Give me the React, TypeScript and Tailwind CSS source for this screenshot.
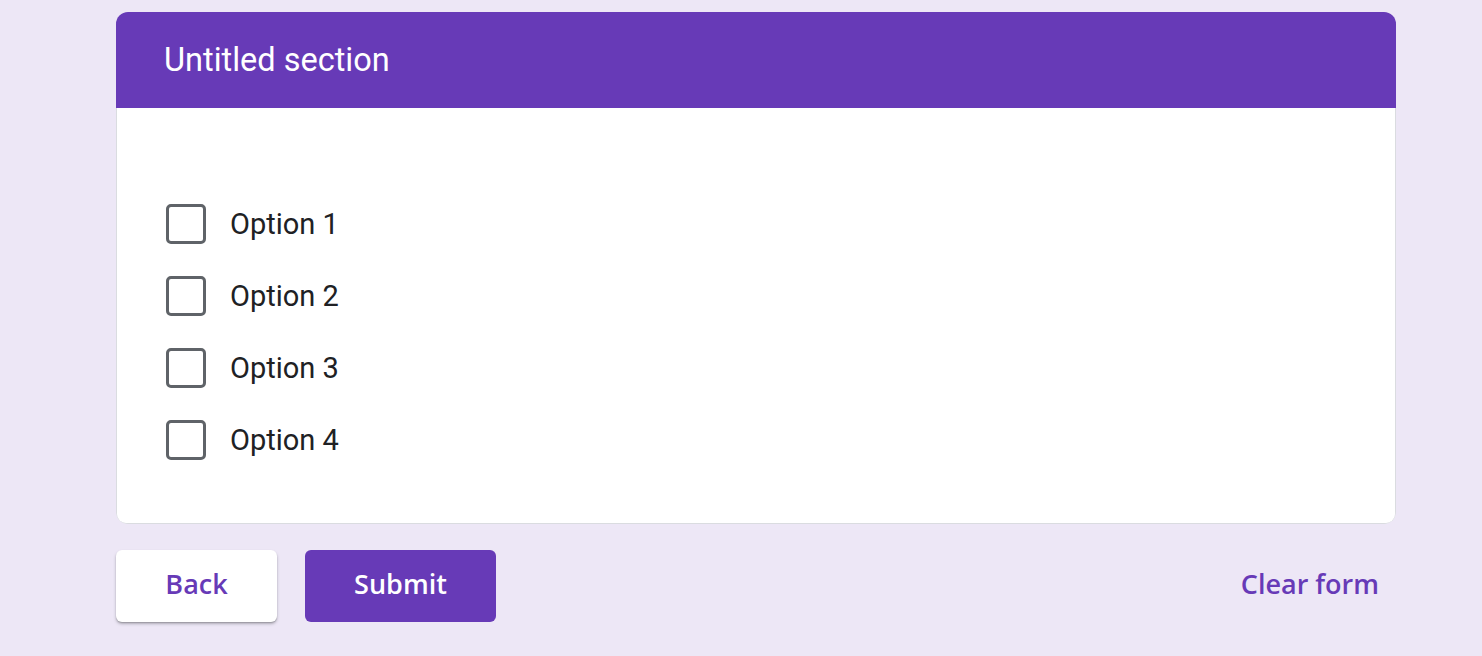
const options = ['Option 1', 'Option 2', 'Option 3', 'Option 4']

function Checkbox() {
  return <div className="w-10 h-10 rounded-[5px] border-[3px] border-[#5f6368] shrink-0" />
}

export default function App() {
  return (
    <div className="min-h-screen bg-[#ede7f6] font-['Roboto',sans-serif] pt-3">
      <div className="ml-[116px] w-[1280px]">
        <div className="rounded-[12px] overflow-hidden">
          <div className="h-24 bg-[#673ab7] px-12 flex items-center">
            <h2 className="text-[32.5px] text-white leading-none">Untitled section</h2>
          </div>
          <div className="bg-white border border-t-0 border-[#dadce0] rounded-b-[10px] pl-12 pt-20 pb-[47px]">
            {options.map((o) => (
              <label key={o} className="h-[72px] flex items-center gap-6 pl-px">
                <Checkbox />
                <span className="text-[29px] text-[#202124] leading-none">{o}</span>
              </label>
            ))}
          </div>
        </div>

        <div className="mt-[26px] flex items-center font-['Open_Sans',sans-serif]">
          <button className="w-[161px] h-[72px] pb-1 bg-white rounded-[6px] shadow-[0_2px_3px_rgba(60,64,67,0.35),0_1px_1px_rgba(60,64,67,0.2)] text-[27px] font-semibold text-[#673ab7]">
            Back
          </button>
          <button className="ml-7 w-[191px] h-[72px] pb-1 bg-[#673ab7] rounded-[6px] text-[27px] font-semibold text-white">
            Submit
          </button>
          <button className="ml-auto mr-[17px] pb-1 text-[27px] font-semibold text-[#673ab7]">Clear form</button>
        </div>
      </div>
    </div>
  )
}
